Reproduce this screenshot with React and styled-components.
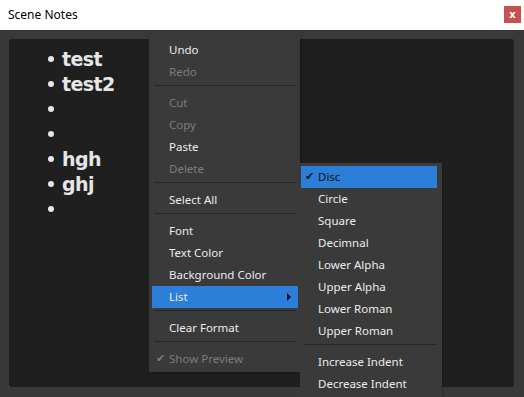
import styled, { createGlobalStyle } from "styled-components";

const GlobalStyle = createGlobalStyle`
  html, body {
    margin: 0;
    padding: 0;
    background: #393939;
  }
  #root {
    width: 524px;
    height: 397px;
  }
`;

const mainItems = [
  { label: "Undo" },
  { label: "Redo", disabled: true },
  { sep: true },
  { label: "Cut", disabled: true },
  { label: "Copy", disabled: true },
  { label: "Paste" },
  { label: "Delete", disabled: true },
  { sep: true },
  { label: "Select All" },
  { sep: true },
  { label: "Font" },
  { label: "Text Color" },
  { label: "Background Color" },
  { label: "List", active: true, sub: true },
  { sep: true },
  { label: "Clear Format" },
  { sep: true },
  { label: "Show Preview", disabled: true, checked: true },
];

const listItems = [
  { label: "Disc", active: true, checked: true },
  { label: "Circle" },
  { label: "Square" },
  { label: "Decimnal" },
  { label: "Lower Alpha" },
  { label: "Upper Alpha" },
  { label: "Lower Roman" },
  { label: "Upper Roman" },
  { sep: true },
  { label: "Increase Indent" },
  { label: "Decrease Indent" },
];

const lines = ["test", "test2", "", "", "hgh", "ghj", ""];

function MenuList({ items, dark }) {
  return items.map((it, i) =>
    it.sep ? (
      <Separator key={i} />
    ) : (
      <Item key={i} $active={it.active} $disabled={it.disabled} $dark={dark}>
        <Check>{it.checked ? "✔" : ""}</Check>
        <Label>{it.label}</Label>
        {it.sub && <Arrow />}
      </Item>
    )
  );
}

export default function App() {
  return (
    <>
      <GlobalStyle />
      <Window>
        <TitleBar>
          <Title>Scene Notes</Title>
          <Close>x</Close>
        </TitleBar>
        <Body>
          <Editor>
            {lines.map((t, i) => (
              <Line key={i}>
                <Bullet />
                <span>{t}</span>
              </Line>
            ))}
          </Editor>
        </Body>

        <Menu>
          <MenuList items={mainItems} />
        </Menu>
        <SubMenu>
          <MenuList items={listItems} dark />
        </SubMenu>
      </Window>
    </>
  );
}

/* ========================= STYLES ========================= */

const Window = styled.div`
  position: relative;
  width: 524px;
  height: 397px;
  overflow: hidden;
  display: flex;
  flex-direction: column;
  background: #393939;
  font-family: "Noto Sans", "Open Sans", sans-serif;
`;

const TitleBar = styled.div`
  height: 30px;
  flex: 0 0 auto;
  background: #ffffff;
  display: flex;
  align-items: center;
  justify-content: space-between;
  padding: 0 3px 0 8px;
`;

const Title = styled.div`
  font-size: 12px;
  color: #000;
  margin-top: -1px;
`;

const Close = styled.div`
  width: 17px;
  height: 17px;
  margin-top: -1px;
  background: #c75050;
  color: #fff;
  font-family: "DejaVu Sans", sans-serif;
  font-weight: 700;
  font-size: 10px;
  display: grid;
  place-items: center;
  line-height: 1;
`;

const Body = styled.div`
  flex: 1;
  display: flex;
  padding: 9px 10px 10px 9px;
`;

const Editor = styled.div`
  flex: 1;
  background: #1f1f1f;
  border-radius: 3px;
  padding: 7px 0 0 39px;
  display: flex;
  flex-direction: column;
`;

const Line = styled.div`
  height: 25px;
  display: flex;
  align-items: center;
  gap: 8px;
  font-family: "DejaVu Sans", sans-serif;
  font-weight: 700;
  font-size: 19px;
  letter-spacing: -0.6px;
  color: #e6e6e6;
`;

const Bullet = styled.span`
  width: 6px;
  height: 6px;
  border-radius: 50%;
  background: #e6e6e6;
  flex: 0 0 auto;
  margin-top: 1px;
`;

const MenuBox = styled.div`
  position: absolute;
  background: #3a3a3a;
  box-shadow: 1px 1px 2px rgba(0, 0, 0, 0.25);
  display: flex;
  flex-direction: column;
`;

const Menu = styled(MenuBox)`
  left: 149px;
  top: 37px;
  width: 151px;
  padding: 2px 2px 2px 3px;
  box-sizing: border-box;
`;

const SubMenu = styled(MenuBox)`
  left: 300px;
  top: 163px;
  width: 142px;
  padding: 3px 5px 3px 1px;
  box-sizing: border-box;
`;

const Item = styled.div`
  height: 22px;
  box-sizing: border-box;
  padding-bottom: 1px;
  display: flex;
  align-items: center;
  font-size: 11.5px;
  background: ${(p) => (p.$active ? "#2b7fd8" : "transparent")};
  color: ${(p) =>
    p.$disabled ? "#7c7c7c" : p.$active && p.$dark ? "#111" : "#ececec"};
`;

const Check = styled.span`
  width: 17px;
  flex: 0 0 auto;
  text-align: center;
  font-size: 11px;
  font-family: "DejaVu Sans", sans-serif;
`;

const Label = styled.span`
  flex: 1;
  white-space: nowrap;
`;

const Arrow = styled.span`
  width: 0;
  height: 0;
  margin-right: 7px;
  border-top: 4px solid transparent;
  border-bottom: 4px solid transparent;
  border-left: 4px solid #111;
`;

const Separator = styled.div`
  height: 9px;
  flex: 0 0 auto;
  display: flex;
  align-items: flex-start;
  padding: 2px 2px 0;
  box-sizing: border-box;

  &::before {
    content: "";
    flex: 1;
    height: 1px;
    background: #262626;
  }
`;
